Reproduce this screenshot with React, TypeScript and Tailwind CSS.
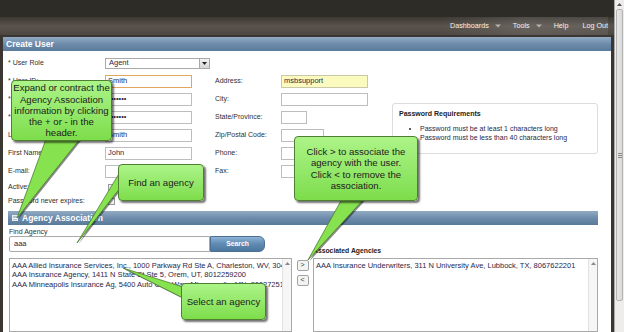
import React from 'react';

type RowProps = { label: string; lw: string; children?: React.ReactNode; h?: string };

const Row = ({ label, lw, children, h = 'h-[18px]' }: RowProps) => (
  <div className={`flex ${h} items-center`}>
    <span className={`${lw} shrink-0 whitespace-nowrap text-[7px] text-[#2f2f2f]`}>{label}</span>
    {children}
  </div>
);

type FieldProps = { w: string; value?: string; className?: string };

const Field = ({ w, value = '', className = 'border-[#bdbdbd] bg-white' }: FieldProps) => (
  <div className={`${w} ${className} flex h-[13px] items-center border px-[2px] text-[7.5px] text-[#2a2848]`}>
    {value}
  </div>
);

const Check = () => <div className="ml-[3px] h-[7px] w-[7px] border border-[#9a9a9a] bg-[#eeeeee]" />;

const Caret = () => (
  <svg width="6" height="4" viewBox="0 0 6 4" className="ml-[6px]">
    <path d="M0 0.5 H6 L3 3.5 Z" fill="#b9b2ab" />
  </svg>
);

const NavBar = () => (
  <div className="flex h-[18px] items-center justify-end bg-gradient-to-b from-[#3c3833] via-[#5a534d] to-[#4d4742] pr-[6px] text-[7.2px] text-[#f4f0ea]">
    <div className="flex h-full items-center bg-gradient-to-r from-transparent via-[#ffffff1a] to-[#ffffff12] pl-[8px]">
      <span>Dashboards</span>
      <Caret />
      <span className="ml-[12px]">Tools</span>
      <Caret />
      <span className="ml-[12px]">Help</span>
      <span className="ml-[14px]">Log Out</span>
    </div>
  </div>
);

const ListScroll = () => (
  <div className="flex w-[9px] shrink-0 justify-center border-l border-[#e2e2e2] bg-[#f6f6f6] pt-[3px]">
    <svg width="5" height="3" viewBox="0 0 5 3">
      <path d="M0 3 L2.5 0 L5 3 Z" fill="#8a8a8a" />
    </svg>
  </div>
);

const BlueHeader = ({ children, className = '' }: { children: React.ReactNode; className?: string }) => (
  <div
    className={`flex h-[14px] items-center bg-gradient-to-b from-[#93abc4] via-[#6d8cab] to-[#5a7a99] text-[8.5px] font-bold text-white ${className}`}
  >
    {children}
  </div>
);

const Callout = ({ className, children }: { className: string; children: React.ReactNode }) => (
  <div
    className={`absolute flex items-center justify-center rounded-[4px] border border-[#4f7f31] bg-gradient-to-b from-[#acf488] to-[#7ddd4a] text-center text-[9.6px] leading-[11.3px] text-[#1c1c1c] shadow-[2px_2px_2px_rgba(0,0,0,0.55)] ${className}`}
  >
    {children}
  </div>
);

const Tails = () => {
  const tails = [
    '46,139 80,139 17,218',
    '120,172 124,183 77,243',
    '342,199 364,199 308,260',
    '183,287 183,298 123,268',
  ];
  return (
    <svg className="pointer-events-none absolute left-0 top-0" width="624" height="332" viewBox="0 0 624 332">
      {tails.map((p) => (
        <polygon key={'s' + p} points={p} fill="rgba(0,0,0,0.45)" transform="translate(1.5 1.2)" />
      ))}
      {tails.map((p) => (
        <polygon key={p} points={p} fill="#86e34f" stroke="#3f6b24" strokeWidth="0.7" />
      ))}
    </svg>
  );
};

export default function App() {
  return (
    <div className="relative flex h-[332px] w-[624px] overflow-hidden bg-[#3b3631] font-['Liberation_Sans',Arial,sans-serif]">
      <div className="flex w-[614px] flex-col">
        <div className="h-[17px] bg-[#2e2c26]" />
        <NavBar />
        <div className="mt-[2px] flex-1 px-[3px]">
          <div className="flex h-full flex-col bg-white">
            <BlueHeader className="pl-[3px]">Create User</BlueHeader>

            {/* form */}
            <div className="flex pl-[5px] pt-[3px]">
              <div className="w-[207px]">
                <Row label="* User Role" lw="w-[97px]">
                  <div className="flex h-[11px] w-[105px] items-center border border-[#a9a9a9] bg-white">
                    <span className="flex-1 pl-[3px] text-[7.5px] text-[#2a2848]">Agent</span>
                    <div className="flex h-full w-[10px] items-center justify-center border-l border-[#a9a9a9] bg-gradient-to-b from-[#f4f4f4] to-[#d6d6d6]">
                      <svg width="5" height="3" viewBox="0 0 5 3">
                        <path d="M0 0 H5 L2.5 3 Z" fill="#222" />
                      </svg>
                    </div>
                  </div>
                </Row>
                <Row label="* User ID:" lw="w-[97px]">
                  <Field w="w-[87px]" value="Smith" className="border-[#e3a660] bg-white" />
                </Row>
                <Row label="* Password:" lw="w-[97px]">
                  <Field w="w-[87px]" value="•••••••" />
                </Row>
                <Row label="* Confirm Password:" lw="w-[97px]">
                  <Field w="w-[87px]" value="•••••••" />
                </Row>
                <Row label="Last Name:" lw="w-[97px]">
                  <Field w="w-[87px]" value="Smith" />
                </Row>
                <Row label="First Name:" lw="w-[97px]">
                  <Field w="w-[87px]" value="John" />
                </Row>
                <Row label="E-mail:" lw="w-[97px]">
                  <Field w="w-[87px]" />
                </Row>
                <Row label="Active:" lw="w-[97px]" h="h-[14px]">
                  <Check />
                </Row>
                <Row label="Password never expires:" lw="w-[97px]" h="h-[14px]">
                  <Check />
                </Row>
              </div>

              <div className="w-[177px]">
                <div className="h-[18px]" />
                <Row label="Address:" lw="w-[66px]">
                  <Field w="w-[87px]" value="msbsupport" className="border-[#c9c9a8] bg-[#fbfbbf]" />
                </Row>
                <Row label="City:" lw="w-[66px]">
                  <Field w="w-[87px]" />
                </Row>
                <Row label="State/Province:" lw="w-[66px]">
                  <Field w="w-[26px]" />
                </Row>
                <Row label="Zip/Postal Code:" lw="w-[66px]">
                  <Field w="w-[43px]" />
                </Row>
                <Row label="Phone:" lw="w-[66px]">
                  <Field w="w-[87px]" />
                </Row>
                <Row label="Fax:" lw="w-[66px]">
                  <Field w="w-[87px]" />
                </Row>
              </div>

              <div className="w-[206px] pt-[49px]">
                <div className="h-[51px] rounded-[3px] border border-[#dcdcdc] pl-[6px] pt-[5px] text-[7px] text-[#2b2745]">
                  <div className="font-bold leading-[9px] text-[#222]">Password Requirements</div>
                  <ul className="mt-[6px] list-disc pl-[21px] leading-[9px]">
                    <li>Password must be at least 1 characters long</li>
                    <li>Password must be less than 40 characters long</li>
                  </ul>
                </div>
              </div>
            </div>

            {/* agency association */}
            <BlueHeader className="ml-[5px] mr-[13px] mt-[3px] pl-[4px]">
              <div className="mr-[4px] flex h-[6px] w-[6px] items-center justify-center border border-[#e8edf2] bg-[#aebfd0]">
                <div className="h-[1px] w-[4px] bg-white" />
              </div>
              Agency Association
            </BlueHeader>

            <div className="flex flex-1 pl-[6px] pr-[13px]">
              <div className="flex w-[283px] flex-col">
                <div className="mt-[2px] h-[9px] text-[7px] leading-[9px] text-[#2f2f2f]">Find Agency</div>
                <div className="flex h-[16px]">
                  <div className="flex flex-1 items-center rounded-l-[2px] border border-[#a9a9a9] pl-[4px] text-[7.5px] text-[#2a2848]">
                    aaa
                  </div>
                  <div className="flex w-[55px] items-center justify-center rounded-r-[6px] border border-[#4c6f92] bg-gradient-to-b from-[#8db3d6] via-[#5f8ab2] to-[#4c789f] text-[6.8px] font-bold text-white">
                    Search
                  </div>
                  <div className="w-[27px]" />
                </div>
                <div className="mt-[6px] flex flex-1 border border-[#a9a9a9]">
                  <div className="flex-1 overflow-hidden whitespace-nowrap pl-[2px] pt-[2px] text-[7.5px] leading-[9.4px] text-[#2b2748]">
                    <div>AAA Allied Insurance Services, Inc., 1000 Parkway Rd Ste A, Charleston, WV, 3043444211</div>
                    <div>AAA Insurance Agency, 1411 N State St Ste 5, Orem, UT, 8012259200</div>
                    <div>AAA Minneapolis Insurance Ag, 5400 Auto Club Way, Minneapolis, MN, 8002725125</div>
                  </div>
                  <ListScroll />
                </div>
              </div>

              <div className="flex w-[21px] flex-col items-center pt-[35px]">
                <div className="flex h-[11px] w-[12px] items-center justify-center rounded-[2px] border border-[#a3a3a3] bg-[#f3f3f3] text-[7px] text-[#333]">
                  &gt;
                </div>
                <div className="mt-[4px] flex h-[11px] w-[12px] items-center justify-center rounded-[2px] border border-[#a3a3a3] bg-[#f3f3f3] text-[7px] text-[#333]">
                  &lt;
                </div>
              </div>

              <div className="flex flex-1 flex-col">
                <div className="flex h-[33px] items-end pb-[2px] text-[6.8px] font-bold text-[#222]">Associated Agencies</div>
                <div className="flex flex-1 border border-[#a9a9a9]">
                  <div className="flex-1 overflow-hidden whitespace-nowrap pl-[2px] pt-[2px] text-[7.5px] leading-[9.4px] text-[#2b2748]">
                    AAA Insurance Underwriters, 311 N University Ave, Lubbock, TX, 8067622201
                  </div>
                  <ListScroll />
                </div>
              </div>
            </div>
          </div>
        </div>
      </div>

      {/* page scrollbar */}
      <div className="flex w-[10px] flex-col border-l border-[#a9a9a9] bg-[#ededed]">
        <div className="flex h-[9px] items-center justify-center">
          <svg width="5" height="3" viewBox="0 0 5 3">
            <path d="M0 3 L2.5 0 L5 3 Z" fill="#555" />
          </svg>
        </div>
        <div className="mx-[1px] flex h-[292px] items-center justify-center rounded-[2px] border border-[#b3b3b3] bg-gradient-to-r from-[#e9e9e9] to-[#d9d9d9]">
          <div className="flex flex-col gap-[1px]">
            <div className="h-[1px] w-[4px] bg-[#888]" />
            <div className="h-[1px] w-[4px] bg-[#888]" />
            <div className="h-[1px] w-[4px] bg-[#888]" />
          </div>
        </div>
      </div>

      <Tails />

      <Callout className="left-[11px] top-[80px] h-[61px] w-[101px]">
        <span>
          Expand or contract the
          <br />
          Agency Association
          <br />
          information by clicking
          <br />
          the + or - in the
          <br />
          header.
        </span>
      </Callout>
      <Callout className="left-[118px] top-[164px] h-[37px] w-[86px]">Find an agency</Callout>
      <Callout className="left-[294px] top-[136px] h-[65px] w-[124px]">
        <span>
          Click &gt; to associate the
          <br />
          agency with the user.
          <br />
          Click &lt; to remove the
          <br />
          association.
        </span>
      </Callout>
      <Callout className="left-[181px] top-[283px] h-[37px] w-[85px]">Select an agency</Callout>
    </div>
  );
}
